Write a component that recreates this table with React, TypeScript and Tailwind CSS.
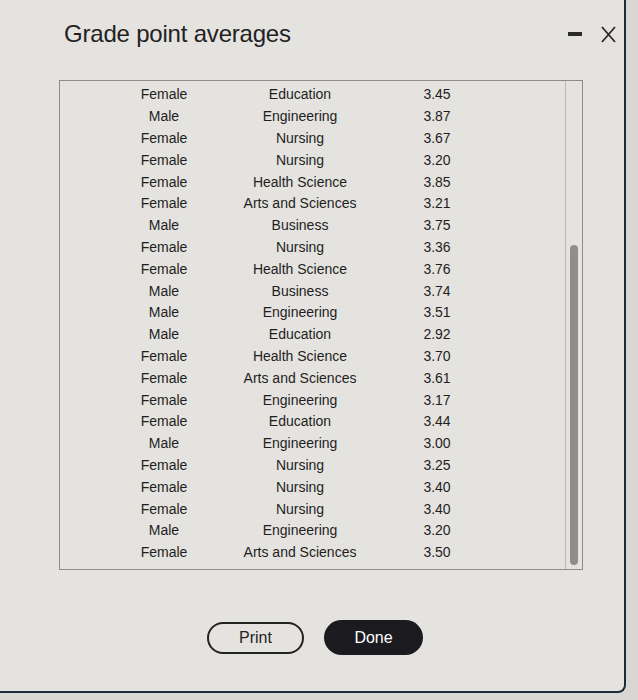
import React from "react";

const rows: [string, string, string][] = [
  ["Female", "Education", "3.45"],
  ["Male", "Engineering", "3.87"],
  ["Female", "Nursing", "3.67"],
  ["Female", "Nursing", "3.20"],
  ["Female", "Health Science", "3.85"],
  ["Female", "Arts and Sciences", "3.21"],
  ["Male", "Business", "3.75"],
  ["Female", "Nursing", "3.36"],
  ["Female", "Health Science", "3.76"],
  ["Male", "Business", "3.74"],
  ["Male", "Engineering", "3.51"],
  ["Male", "Education", "2.92"],
  ["Female", "Health Science", "3.70"],
  ["Female", "Arts and Sciences", "3.61"],
  ["Female", "Engineering", "3.17"],
  ["Female", "Education", "3.44"],
  ["Male", "Engineering", "3.00"],
  ["Female", "Nursing", "3.25"],
  ["Female", "Nursing", "3.40"],
  ["Female", "Nursing", "3.40"],
  ["Male", "Engineering", "3.20"],
  ["Female", "Arts and Sciences", "3.50"],
];

export default function App() {
  return (
    <div
      className="w-[638px] h-[700px] bg-[#d8d7d4] overflow-hidden"
      style={{ fontFamily: '"Liberation Sans", Arial, sans-serif' }}
    >
      <div className="w-[626px] h-[693px] bg-[#e5e3df] border-r-2 border-b-2 border-[#1d2a3a] rounded-br-[8px] flex flex-col">
        <div className="flex items-center justify-between h-[66px] pl-[64px] pr-[8px]">
          <h1 className="text-[24px] text-[#222] tracking-[-0.2px] mt-[2px]">Grade point averages</h1>
          <div className="flex items-center gap-[19px] mt-[2px]">
            <div className="w-[14px] h-[4px] bg-[#2a2a2a]" />
            <svg width="15" height="17" viewBox="0 0 15 17">
              <path d="M1 1 L14 16 M14 1 L1 16" stroke="#2a2a2a" strokeWidth="1.8" fill="none" />
            </svg>
          </div>
        </div>
        <div className="ml-[59px] mt-[14px] w-[524px] h-[490px] border border-[#8d8c8a] flex">
          <div className="flex-1 pt-[3px]">
            {rows.map((r, i) => (
              <div key={i} className="flex h-[21.8px] items-center text-[14px] text-[#1e1e1e] pl-[59px]">
                <div className="w-[90px] text-center">{r[0]}</div>
                <div className="w-[182px] text-center">{r[1]}</div>
                <div className="w-[92px] text-center">{r[2]}</div>
              </div>
            ))}
          </div>
          <div className="w-[17px] border-l border-[#b9b8b5] flex flex-col pt-[164px] pb-[4px] items-center">
            <div className="w-[8px] flex-1 rounded-full bg-[#8f8e8c]" />
          </div>
        </div>
        <div className="flex justify-center items-center gap-[20px] mt-[50px] ml-[6px]">
          <button className="w-[97px] h-[32px] rounded-full border-2 border-[#222] text-[16px] text-[#222]">
            Print
          </button>
          <button className="w-[99px] h-[35px] rounded-full bg-[#1b1b1f] text-[16px] text-white">
            Done
          </button>
        </div>
      </div>
    </div>
  );
}
